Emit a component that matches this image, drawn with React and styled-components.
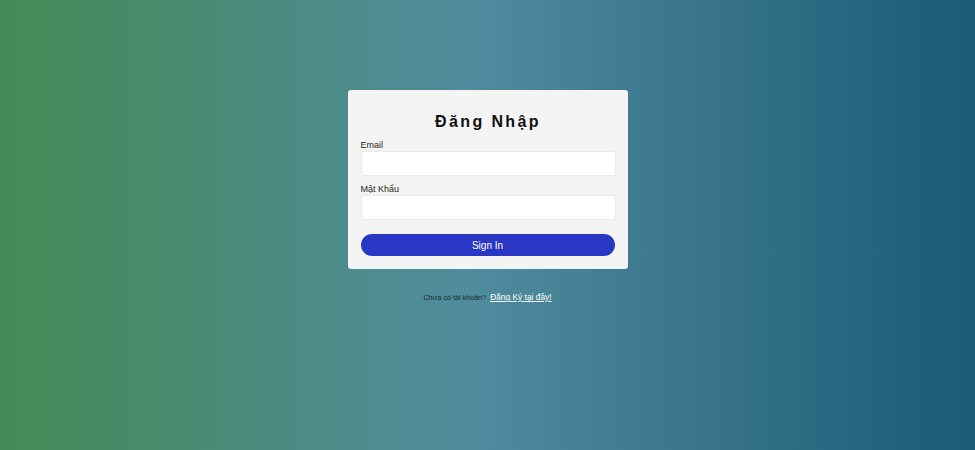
import styled, { createGlobalStyle } from 'styled-components'

const Global = createGlobalStyle`
html, body { margin: 0; height: 100%; }
body {
  font-family: "Liberation Sans", Arial, sans-serif;
  background: linear-gradient(90deg, #438b55 0%, #4f8c9e 48%, #1c5a75 100%);
}
`
const Page = styled.div`
height: 450px;
display: flex;
flex-direction: column;
align-items: center;
padding-top: 90px;
box-sizing: border-box;
`
const Card = styled.form`
width: 280px;
box-sizing: border-box;
background: #f4f4f4;
border-radius: 3px;
padding: 23px 12px 13px 13px;
display: flex;
flex-direction: column;
`
const Title = styled.h2`
margin: 0 0 10px;
text-align: center;
font-size: 16px;
font-weight: bold;
letter-spacing: 2.4px;
color: #111;
`
const Label = styled.label`
font-size: 9px;
color: #2a1f1a;
line-height: 9px;
margin-bottom: 1px;
`
const Input = styled.input`
height: 25px;
box-sizing: border-box;
border: 1px solid #eaeaea;
border-radius: 2px;
background: #fff;
margin-bottom: ${p => p.$last ? '14px' : '9px'};
outline: none;
`
const Button = styled.button`
height: 22px;
width: 254px;
border: none;
border-radius: 11px;
background: #2a36c4;
color: #fff;
font-family: "Liberation Sans", Arial, sans-serif;
font-size: 10px;
cursor: pointer;
`
const Footer = styled.div`
margin-top: 23px;
display: flex;
align-items: baseline;
gap: 4px;
`
const Hint = styled.span`
font-size: 7.2px;
color: #1a2a2a;
`
const Link = styled.a`
font-size: 8.4px;
color: #fff;
text-decoration: underline;
`

export default function App() {
    return (
        <>
            <Global />
            <Page>
                <Card onSubmit={e => e.preventDefault()}>
                    <Title>Đăng Nhập</Title>
                    <Label>Email</Label>
                    <Input type="email" />
                    <Label>Mật Khẩu</Label>
                    <Input type="password" $last />
                    <Button type="submit">Sign In</Button>
                </Card>
                <Footer>
                    <Hint>Chưa có tài khoản?</Hint>
                    <Link href="#">Đăng Ký tại đây!</Link>
                </Footer>
            </Page>
        </>
    )
}
